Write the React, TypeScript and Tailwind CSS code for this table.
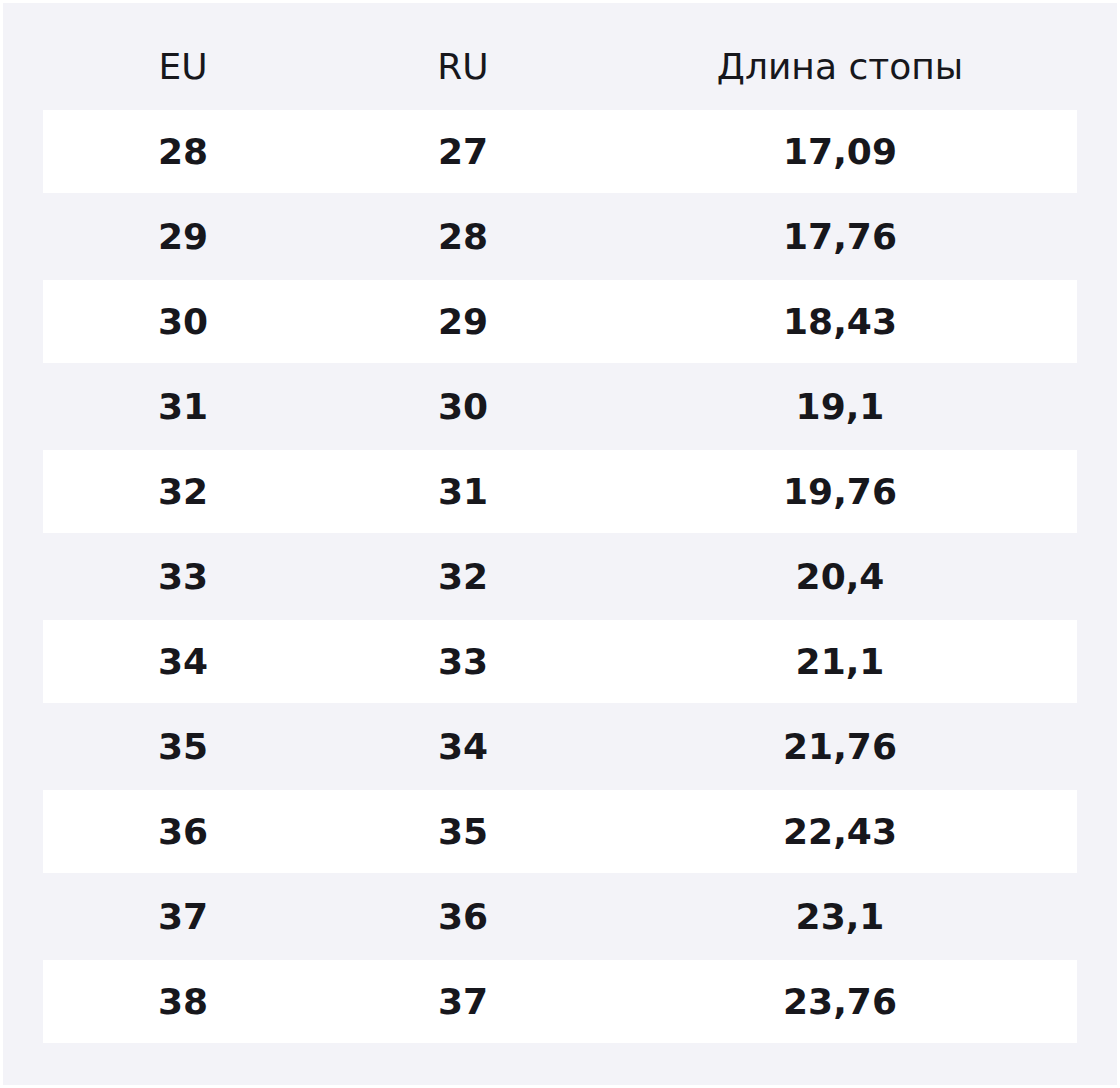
import React from 'react';

// Таблица размеров: EU / RU / длина стопы
const rows: [string, string, string][] = [
  ['28', '27', '17,09'],
  ['29', '28', '17,76'],
  ['30', '29', '18,43'],
  ['31', '30', '19,1'],
  ['32', '31', '19,76'],
  ['33', '32', '20,4'],
  ['34', '33', '21,1'],
  ['35', '34', '21,76'],
  ['36', '35', '22,43'],
  ['37', '36', '23,1'],
  ['38', '37', '23,76'],
];

export default function App() {
  return (
    <div className="w-[1120px] h-[1088px] bg-white p-[3px]" style={{ fontFamily: '"DejaVu Sans", sans-serif' }}>
      <div className="w-[1114px] h-[1082px] bg-[#f3f3f8] px-[40px] pt-[40px] text-[#17171c]">
        <div className="flex h-[67px] items-center pb-[20px] text-[36px] leading-none">
          <div className="w-[280px] text-center">EU</div>
          <div className="w-[280px] text-center">RU</div>
          <div className="flex-1 text-center">Длина стопы</div>
        </div>
        {rows.map(([eu, ru, len], i) => (
          <div key={eu} className="h-[85px]">
            <div
              className={`flex h-[83px] items-center text-[36px] font-bold leading-none ${i % 2 === 0 ? 'bg-white' : ''}`}
            >
              <div className="w-[280px] text-center">{eu}</div>
              <div className="w-[280px] text-center">{ru}</div>
              <div className="flex-1 text-center">{len}</div>
            </div>
          </div>
        ))}
      </div>
    </div>
  );
}
